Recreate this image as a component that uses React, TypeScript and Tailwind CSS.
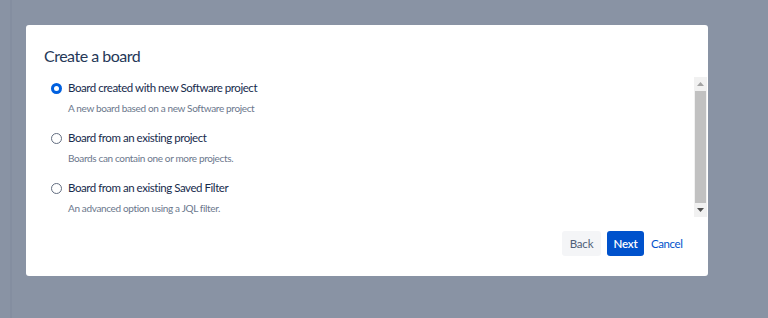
import React, { useState } from 'react';

const options = [
  { id: 'new', label: 'Board created with new Software project', desc: 'A new board based on a new Software project' },
  { id: 'existing', label: 'Board from an existing project', desc: 'Boards can contain one or more projects.' },
  { id: 'filter', label: 'Board from an existing Saved Filter', desc: 'An advanced option using a JQL filter.' },
];

const App: React.FC = () => {
  const [selected, setSelected] = useState('new');

  return (
    <div className="flex h-[318px] w-full bg-[#8993a4] font-['Lato',sans-serif]">
      {/* faint page edge */}
      <div className="w-[10px]" />
      <div className="w-[2px] bg-[#848ea0]" />
      <div className="pl-[14px] pt-[25px]">
        <div className="flex h-[251px] w-[682px] flex-col rounded-[3px] bg-white">
          <h2 className="pl-[18px] pt-[19px] text-[16px] leading-[24px] tracking-[-0.5px] text-[#253858]">Create a board</h2>

          {/* scrollable content */}
          <div className="mt-[9px] flex h-[140px] pr-[1px]">
            <div className="flex-1 pl-[25px] pt-[2px]">
              {options.map((o) => (
                <div key={o.id} className="h-[50px]" onClick={() => setSelected(o.id)}>
                  <div className="flex h-[18px] items-center gap-[6px]">
                    {selected === o.id ? (
                      <span className="flex h-[11px] w-[11px] items-center justify-center rounded-full bg-[#0060df]">
                        <span className="h-[5px] w-[5px] rounded-full bg-white" />
                      </span>
                    ) : (
                      <span className="h-[11px] w-[11px] rounded-full border border-[#626d80] bg-white" />
                    )}
                    <span className="text-[11.5px] tracking-[-0.45px] text-[#172b4d]">{o.label}</span>
                  </div>
                  <div className="mt-[2px] pl-[17px] text-[10px] leading-[18px] tracking-[-0.35px] text-[#6b778c]">{o.desc}</div>
                </div>
              ))}
            </div>

            {/* scrollbar */}
            <div className="flex w-[13px] flex-col bg-[#f1f1f1]">
              <div className="flex h-[14px] items-center justify-center">
                <svg width="7" height="4" viewBox="0 0 7 4"><path d="M3.5 0L7 4H0z" fill="#a3a3a3" /></svg>
              </div>
              <div className="mx-[1px] flex-1 bg-[#c1c1c1]" />
              <div className="flex h-[14px] items-center justify-center">
                <svg width="7" height="4" viewBox="0 0 7 4"><path d="M0 0h7L3.5 4z" fill="#505050" /></svg>
              </div>
            </div>
          </div>

          <div className="mt-[14px] flex items-center justify-end pr-[26px] text-[11.5px] tracking-[-0.2px]">
            <button className="h-[25px] w-[39px] rounded-[3px] bg-[#f4f5f7] text-[#505f79]">Back</button>
            <button className="ml-[6px] h-[25px] w-[37px] rounded-[3px] bg-[#0052cc] font-semibold text-white">Next</button>
            <button className="ml-[7px] h-[25px] w-[31px] tracking-[-0.4px] text-[#0052cc]">Cancel</button>
          </div>
        </div>
      </div>
    </div>
  );
};

export default App;
